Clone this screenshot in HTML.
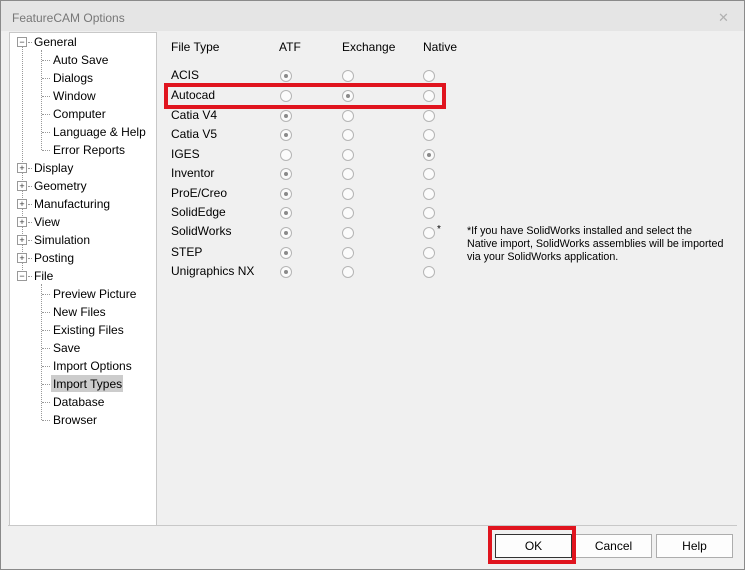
<!DOCTYPE html>
<html><head><style>
body{margin:0;width:745px;height:570px;overflow:hidden;background:#f0f0f0;font-family:"Liberation Sans",sans-serif;font-size:12px;color:#000;position:relative}
.a{position:absolute;white-space:nowrap}
.win{position:absolute;left:0;top:0;width:743px;height:568px;border:1px solid #8a8a8a;}
.title{position:absolute;left:1px;top:1px;width:743px;height:30px;background:#e5e5e5}
.tree{position:absolute;left:9px;top:32px;width:146px;height:493px;background:#fff;border:1px solid #c8c8c8;border-bottom:none}
.t{position:absolute;line-height:16px;font-size:12px}
.box{position:absolute;width:8px;height:8px;border:1px solid #999;background:#fff;font-size:9px;line-height:8px;text-align:center;color:#333}
.vd{position:absolute;border-left:1px dotted #999;width:0}
.hd{position:absolute;border-top:1px dotted #999;height:0}
.r{position:absolute;width:10px;height:10px;border:1px solid #b5b5b5;border-radius:50%;background:#fbfbfb}
.r.c::after{content:"";position:absolute;left:3px;top:3px;width:4px;height:4px;border-radius:50%;background:#8a8a8a}
.btn{position:absolute;top:534px;height:22px;width:75px;background:#fdfdfd;border:1px solid #adadad;text-align:center;line-height:22px}
</style></head><body>
<div class="win"></div>
<div class="title"></div>
<div class="a" style="left:12px;top:11px;color:#777;font-size:12px">FeatureCAM Options</div>
<div class="a" style="left:718px;top:10px;color:#b0b0b0;font-size:13px">✕</div>

<div class="tree"></div>
<div class="a" style="left:8px;top:525px;width:729px;height:1px;background:#c8c8c8"></div>

<div class="vd" style="left:22px;top:46px;height:228px"></div>
<div class="vd" style="left:41px;top:50px;height:100px"></div>
<div class="vd" style="left:41px;top:284px;height:136px"></div>

<div class="box" style="left:17px;top:37px">−</div><div class="hd" style="left:28px;top:42px;width:4px"></div><div class="t" style="left:34px;top:34px">General</div>
<div class="box" style="left:17px;top:163px">+</div><div class="hd" style="left:28px;top:168px;width:4px"></div><div class="t" style="left:34px;top:160px">Display</div>
<div class="box" style="left:17px;top:181px">+</div><div class="hd" style="left:28px;top:186px;width:4px"></div><div class="t" style="left:34px;top:178px">Geometry</div>
<div class="box" style="left:17px;top:199px">+</div><div class="hd" style="left:28px;top:204px;width:4px"></div><div class="t" style="left:34px;top:196px">Manufacturing</div>
<div class="box" style="left:17px;top:217px">+</div><div class="hd" style="left:28px;top:222px;width:4px"></div><div class="t" style="left:34px;top:214px">View</div>
<div class="box" style="left:17px;top:235px">+</div><div class="hd" style="left:28px;top:240px;width:4px"></div><div class="t" style="left:34px;top:232px">Simulation</div>
<div class="box" style="left:17px;top:253px">+</div><div class="hd" style="left:28px;top:258px;width:4px"></div><div class="t" style="left:34px;top:250px">Posting</div>
<div class="box" style="left:17px;top:271px">−</div><div class="hd" style="left:28px;top:276px;width:4px"></div><div class="t" style="left:34px;top:268px">File</div>

<div class="hd" style="left:42px;top:60px;width:8px"></div><div class="t" style="left:53px;top:52px">Auto Save</div>
<div class="hd" style="left:42px;top:78px;width:8px"></div><div class="t" style="left:53px;top:70px">Dialogs</div>
<div class="hd" style="left:42px;top:96px;width:8px"></div><div class="t" style="left:53px;top:88px">Window</div>
<div class="hd" style="left:42px;top:114px;width:8px"></div><div class="t" style="left:53px;top:106px">Computer</div>
<div class="hd" style="left:42px;top:132px;width:8px"></div><div class="t" style="left:53px;top:124px">Language &amp; Help</div>
<div class="hd" style="left:42px;top:150px;width:8px"></div><div class="t" style="left:53px;top:142px">Error Reports</div>

<div class="hd" style="left:42px;top:294px;width:8px"></div><div class="t" style="left:53px;top:286px">Preview Picture</div>
<div class="hd" style="left:42px;top:312px;width:8px"></div><div class="t" style="left:53px;top:304px">New Files</div>
<div class="hd" style="left:42px;top:330px;width:8px"></div><div class="t" style="left:53px;top:322px">Existing Files</div>
<div class="hd" style="left:42px;top:348px;width:8px"></div><div class="t" style="left:53px;top:340px">Save</div>
<div class="hd" style="left:42px;top:366px;width:8px"></div><div class="t" style="left:53px;top:358px">Import Options</div>
<div class="a" style="left:51px;top:375px;width:72px;height:17px;background:#cccccc"></div>
<div class="hd" style="left:42px;top:384px;width:8px"></div><div class="t" style="left:53px;top:376px">Import Types</div>
<div class="hd" style="left:42px;top:402px;width:8px"></div><div class="t" style="left:53px;top:394px">Database</div>
<div class="hd" style="left:42px;top:420px;width:8px"></div><div class="t" style="left:53px;top:412px">Browser</div>

<div class="t" style="left:171px;top:39px">File Type</div>
<div class="t" style="left:279px;top:39px">ATF</div>
<div class="t" style="left:342px;top:39px">Exchange</div>
<div class="t" style="left:423px;top:39px">Native</div>

<div class="t" style="left:171px;top:67px">ACIS</div><div class="r c" style="left:280px;top:70px"></div><div class="r" style="left:342px;top:70px"></div><div class="r" style="left:423px;top:70px"></div>
<div class="t" style="left:171px;top:87px">Autocad</div><div class="r" style="left:280px;top:90px"></div><div class="r c" style="left:342px;top:90px"></div><div class="r" style="left:423px;top:90px"></div>
<div class="t" style="left:171px;top:107px">Catia V4</div><div class="r c" style="left:280px;top:110px"></div><div class="r" style="left:342px;top:110px"></div><div class="r" style="left:423px;top:110px"></div>
<div class="t" style="left:171px;top:126px">Catia V5</div><div class="r c" style="left:280px;top:129px"></div><div class="r" style="left:342px;top:129px"></div><div class="r" style="left:423px;top:129px"></div>
<div class="t" style="left:171px;top:146px">IGES</div><div class="r" style="left:280px;top:149px"></div><div class="r" style="left:342px;top:149px"></div><div class="r c" style="left:423px;top:149px"></div>
<div class="t" style="left:171px;top:165px">Inventor</div><div class="r c" style="left:280px;top:168px"></div><div class="r" style="left:342px;top:168px"></div><div class="r" style="left:423px;top:168px"></div>
<div class="t" style="left:171px;top:185px">ProE/Creo</div><div class="r c" style="left:280px;top:188px"></div><div class="r" style="left:342px;top:188px"></div><div class="r" style="left:423px;top:188px"></div>
<div class="t" style="left:171px;top:204px">SolidEdge</div><div class="r c" style="left:280px;top:207px"></div><div class="r" style="left:342px;top:207px"></div><div class="r" style="left:423px;top:207px"></div>
<div class="t" style="left:171px;top:223px">SolidWorks</div><div class="r c" style="left:280px;top:227px"></div><div class="r" style="left:342px;top:227px"></div><div class="r" style="left:423px;top:227px"></div><div class="t" style="left:437px;top:222px;font-size:10px">*</div>
<div class="t" style="left:171px;top:244px">STEP</div><div class="r c" style="left:280px;top:247px"></div><div class="r" style="left:342px;top:247px"></div><div class="r" style="left:423px;top:247px"></div>
<div class="t" style="left:171px;top:263px">Unigraphics NX</div><div class="r c" style="left:280px;top:266px"></div><div class="r" style="left:342px;top:266px"></div><div class="r" style="left:423px;top:266px"></div>

<div class="a" style="left:467px;top:225px;font-size:10.7px;line-height:13px">*If you have SolidWorks installed and select the<br>Native import, SolidWorks assemblies will be imported<br>via your SolidWorks application.</div>

<div class="a" style="left:164px;top:83px;width:274px;height:18px;border:4px solid #e0141e"></div>

<div class="btn" style="left:495px;border-color:#333">OK</div>
<div class="btn" style="left:575px">Cancel</div>
<div class="btn" style="left:656px">Help</div>
<div class="a" style="left:488px;top:526px;width:80px;height:30px;border:4px solid #e0141e"></div>
</body></html>
